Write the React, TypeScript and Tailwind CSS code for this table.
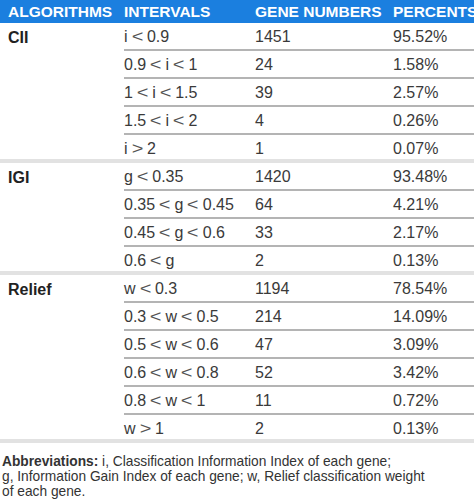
import React from "react";

type Row = { interval: React.ReactNode; n: string; p: string };
type Group = { name: string; rows: Row[] };

const Lt = () => <span className="inline-block mx-[5px] text-[16px] font-light text-[#555] scale-x-125">&lt;</span>;
const Gt = () => <span className="inline-block mx-[5px] text-[16px] font-light text-[#555] scale-x-125">&gt;</span>;

const groups: Group[] = [
  {
    name: "CII",
    rows: [
      { interval: <>i<Lt />0.9</>, n: "1451", p: "95.52%" },
      { interval: <>0.9<Lt />i<Lt />1</>, n: "24", p: "1.58%" },
      { interval: <>1<Lt />i<Lt />1.5</>, n: "39", p: "2.57%" },
      { interval: <>1.5<Lt />i<Lt />2</>, n: "4", p: "0.26%" },
      { interval: <>i<Gt />2</>, n: "1", p: "0.07%" },
    ],
  },
  {
    name: "IGI",
    rows: [
      { interval: <>g<Lt />0.35</>, n: "1420", p: "93.48%" },
      { interval: <>0.35<Lt />g<Lt />0.45</>, n: "64", p: "4.21%" },
      { interval: <>0.45<Lt />g<Lt />0.6</>, n: "33", p: "2.17%" },
      { interval: <>0.6<Lt />g</>, n: "2", p: "0.13%" },
    ],
  },
  {
    name: "Relief",
    rows: [
      { interval: <>w<Lt />0.3</>, n: "1194", p: "78.54%" },
      { interval: <>0.3<Lt />w<Lt />0.5</>, n: "214", p: "14.09%" },
      { interval: <>0.5<Lt />w<Lt />0.6</>, n: "47", p: "3.09%" },
      { interval: <>0.6<Lt />w<Lt />0.8</>, n: "52", p: "3.42%" },
      { interval: <>0.8<Lt />w<Lt />1</>, n: "11", p: "0.72%" },
      { interval: <>w<Gt />1</>, n: "2", p: "0.13%" },
    ],
  },
];

export default function App() {
  return (
    <div
      className="w-[474px] h-[501px] bg-white overflow-hidden text-[#3a3a3a]"
      style={{ fontFamily: '"Liberation Sans", Arial, sans-serif' }}
    >
      <div className="grid grid-cols-[124px_131px_138px_1fr] h-[23px] pb-[2px] bg-[#1b7fdf] text-white font-bold text-[15.5px] items-center whitespace-nowrap overflow-hidden">
        <div className="pl-[8px]">ALGORITHMS</div>
        <div>INTERVALS</div>
        <div>GENE NUMBERS</div>
        <div>PERCENTS</div>
      </div>
      {groups.map((g) => (
        <div key={g.name} className="grid grid-cols-[124px_1fr] border-b-4 border-[#e2e2e2]">
          <div className="pl-[8px] pt-[5px] font-bold text-[16px] text-[#222] leading-[20px]">{g.name}</div>
          <div className="flex flex-col">
            {g.rows.map((r, i) => (
              <div
                key={i}
                className={
                  "grid grid-cols-[131px_138px_1fr] items-center pt-[2px] text-[16px] whitespace-nowrap " +
                  (i < g.rows.length - 1 ? "h-[28px] border-b-2 border-[#b4b4b4]" : "h-[24px]")
                }
              >
                <div>{r.interval}</div>
                <div>{r.n}</div>
                <div>{r.p}</div>
              </div>
            ))}
          </div>
        </div>
      ))}
      <div className="pl-[2px] pt-[11px] text-[13.75px] leading-[15px] text-[#333]">
        <div><span className="font-bold">Abbreviations:</span> i, Classification Information Index of each gene;</div>
        <div>g, Information Gain Index of each gene; w, Relief classification weight</div>
        <div>of each gene.</div>
      </div>
    </div>
  );
}
